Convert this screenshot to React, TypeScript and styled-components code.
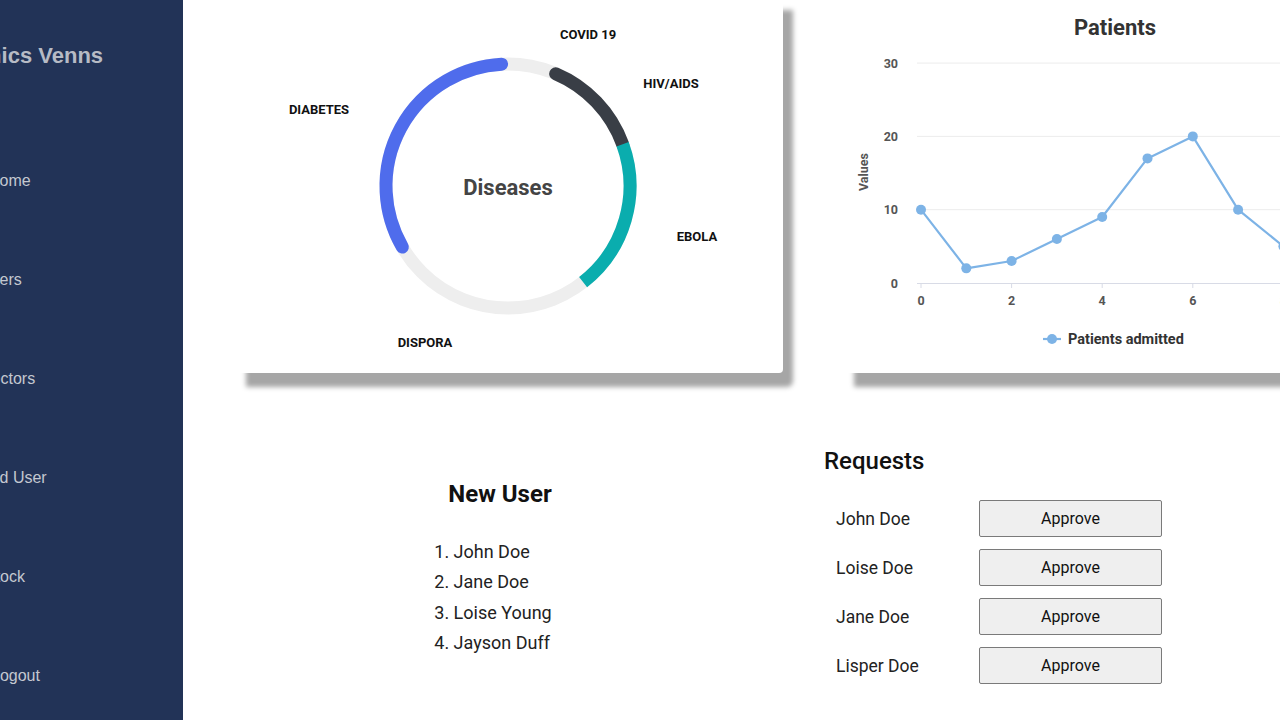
import React from "react";
import styled, { createGlobalStyle } from "styled-components";

// Dashboard: sidebar, two chart cards, new users and requests

const GlobalStyle = createGlobalStyle`
  html, body {
    margin: 0;
    padding: 0;
    overflow: hidden;
    background: #ffffff;
  }
  * {
    box-sizing: border-box;
  }
`;

const navItems = [
  { label: "Home", shift: 12 },
  { label: "Users", shift: 20 },
  { label: "Doctors", shift: 20 },
  { label: "Add User", shift: 20 },
  { label: "Stock", shift: 15 },
  { label: "Logout", shift: 9 },
];

const newUsers = ["John Doe", "Jane Doe", "Loise Young", "Jayson Duff"];
const requests = ["John Doe", "Loise Doe", "Jane Doe", "Lisper Doe"];

const patients = [10, 2, 3, 6, 9, 17, 20, 10, 5];

// donut geometry
const CX = 268;
const CY = 186;
const R = 122;

const point = (deg: number) => {
  const rad = (deg * Math.PI) / 180;
  return `${(CX + R * Math.sin(rad)).toFixed(2)} ${(CY - R * Math.cos(rad)).toFixed(2)}`;
};

const arc = (start: number, end: number) => {
  const large = end - start > 180 ? 1 : 0;
  return `M ${point(start)} A ${R} ${R} 0 ${large} 1 ${point(end)}`;
};

export default function App() {
  const px = (i: number) => 73 + i * 45.3;
  const py = (v: number) => 283 - v * 7.33;
  const linePath = patients
    .map((v, i) => `${i === 0 ? "M" : "L"} ${px(i)} ${py(v)}`)
    .join(" ");

  return (
    <>
      <GlobalStyle />
      <Page>
        <Sidebar>
          <Brand>Clinics Venns</Brand>
          <Nav>
            {navItems.map((item) => (
              <NavItem key={item.label} $shift={item.shift}>
                {item.label}
              </NavItem>
            ))}
          </Nav>
        </Sidebar>

        <Main>
          <CardRow>
            <Card>
              <svg width="543" height="373" viewBox="0 0 543 373">
                <circle cx={CX} cy={CY} r={R} fill="none" stroke="#eeeeee" strokeWidth="13" />
                <path d={arc(240, 357)} fill="none" stroke="#4f6cec" strokeWidth="13" strokeLinecap="round" />
                <path d={arc(23, 70)} fill="none" stroke="#393e46" strokeWidth="13" strokeLinecap="round" />
                <path d={arc(70, 142)} fill="none" stroke="#0aadae" strokeWidth="13" />
                <ChartText x={CX} y={195} textAnchor="middle" fontSize="22" fill="#444">
                  Diseases
                </ChartText>
                <ChartText x={348} y={39} textAnchor="middle" fontSize="13" fill="#111">
                  COVID 19
                </ChartText>
                <ChartText x={431} y={88} textAnchor="middle" fontSize="13" fill="#111">
                  HIV/AIDS
                </ChartText>
                <ChartText x={79} y={114} textAnchor="middle" fontSize="13" fill="#111">
                  DIABETES
                </ChartText>
                <ChartText x={457} y={241} textAnchor="middle" fontSize="13" fill="#111">
                  EBOLA
                </ChartText>
                <ChartText x={185} y={347} textAnchor="middle" fontSize="13" fill="#111">
                  DISPORA
                </ChartText>
              </svg>
            </Card>

            <Card>
              <svg width="543" height="373" viewBox="0 0 543 373">
                <ChartText x={267} y={35} textAnchor="middle" fontSize="22" fill="#333">
                  Patients
                </ChartText>
                {[30, 20, 10].map((v) => (
                  <line key={v} x1="69" x2="543" y1={py(v)} y2={py(v)} stroke="#ececec" strokeWidth="1" />
                ))}
                <line x1="69" x2="543" y1="283.5" y2="283.5" stroke="#d8dbe6" strokeWidth="1.2" />
                {[0, 2, 4, 6, 8].map((v) => (
                  <line key={v} x1={px(v)} x2={px(v)} y1="283" y2="288" stroke="#d8dbe6" strokeWidth="1" />
                ))}
                {[30, 20, 10, 0].map((v) => (
                  <ChartText key={v} x={50} y={py(v) + 4.5} textAnchor="end" fontSize="12.5" fill="#555">
                    {v}
                  </ChartText>
                ))}
                {[0, 2, 4, 6, 8].map((v) => (
                  <ChartText key={v} x={px(v)} y={305} textAnchor="middle" fontSize="12.5" fill="#555">
                    {v}
                  </ChartText>
                ))}
                <ChartText
                  x={0}
                  y={0}
                  textAnchor="middle"
                  fontSize="12.5"
                  fill="#555"
                  transform="translate(20 172) rotate(-90)"
                >
                  Values
                </ChartText>
                <path d={linePath} fill="none" stroke="#7db3e6" strokeWidth="2.2" strokeLinejoin="round" />
                {patients.map((v, i) => (
                  <circle key={i} cx={px(i)} cy={py(v)} r="5" fill="#7db3e6" />
                ))}
                <line x1="195" x2="213" y1="339" y2="339" stroke="#7db3e6" strokeWidth="2.2" />
                <circle cx="204" cy="339" r="5" fill="#7db3e6" />
                <ChartText x={220} y={344} fontSize="14.5" fill="#333">
                  Patients admitted
                </ChartText>
              </svg>
            </Card>
          </CardRow>

          <BottomRow>
            <NewUserColumn>
              <Heading>New User</Heading>
              <UserList>
                {newUsers.map((name) => (
                  <li key={name}>{name}</li>
                ))}
              </UserList>
            </NewUserColumn>

            <RequestsColumn>
              <RequestsHeading>Requests</RequestsHeading>
              <RequestList>
                {requests.map((name) => (
                  <RequestRow key={name}>
                    <RequestName>{name}</RequestName>
                    <ApproveButton>Approve</ApproveButton>
                  </RequestRow>
                ))}
              </RequestList>
            </RequestsColumn>
          </BottomRow>
        </Main>
      </Page>
    </>
  );
}

const Page = styled.div`
  display: flex;
  width: 1420px;
  height: 720px;
  overflow: hidden;
`;

const Sidebar = styled.aside`
  width: 183px;
  flex-shrink: 0;
  height: 720px;
  background-color: #223357;
  overflow: hidden;
  display: flex;
  flex-direction: column;
  font-family: "Liberation Sans", Arial, sans-serif;
`;

const Brand = styled.div`
  margin-top: 42px;
  margin-left: -40px;
  white-space: nowrap;
  font-size: 22px;
  line-height: 28px;
  font-weight: 700;
  color: #b7bbc5;
`;

const Nav = styled.nav`
  margin-top: 101px;
  display: flex;
  flex-direction: column;
  gap: 79px;
`;

const NavItem = styled.div<{ $shift: number }>`
  margin-left: ${(p) => -p.$shift}px;
  white-space: nowrap;
  font-size: 16px;
  line-height: 20px;
  color: #c4c8d0;
`;

const Main = styled.main`
  flex-shrink: 0;
  width: 1237px;
  padding-left: 57px;
  font-family: Roboto, "Liberation Sans", sans-serif;
`;

const CardRow = styled.div`
  display: flex;
  gap: 65px;
`;

const Card = styled.div`
  width: 543px;
  height: 373px;
  flex-shrink: 0;
  background: #ffffff;
  border-radius: 0 0 4px 0;
  box-shadow: 8px 12px 5px 2px #a6a6a6;
`;

const ChartText = styled.text`
  font-family: Roboto, "Liberation Sans", sans-serif;
  font-weight: 700;
`;

const BottomRow = styled.div`
  margin-top: 74px;
  display: flex;
  gap: 64px;
`;

const NewUserColumn = styled.section`
  width: 520px;
  padding-top: 33px;
  display: flex;
  flex-direction: column;
  align-items: center;
`;

const Heading = styled.h2`
  margin: 0;
  font-size: 24px;
  line-height: 28px;
  font-weight: 700;
  color: #111;
`;

const UserList = styled.ol`
  margin: 29px 14px 0 0;
  padding: 0;
  list-style: decimal inside;
  font-size: 18px;
  line-height: 30.3px;
  color: #222;
`;

const RequestsColumn = styled.section`
  display: flex;
  flex-direction: column;
`;

const RequestsHeading = styled.h2`
  margin: 0;
  font-size: 24px;
  line-height: 28px;
  font-weight: 500;
  color: #111;
`;

const RequestList = styled.div`
  margin-top: 25px;
  padding-left: 12px;
  display: flex;
  flex-direction: column;
  gap: 12px;
`;

const RequestRow = styled.div`
  display: flex;
  align-items: center;
`;

const RequestName = styled.span`
  width: 143px;
  font-size: 17.5px;
  color: #222;
`;

const ApproveButton = styled.button`
  width: 183px;
  height: 37px;
  border: 1px solid #7a7a7a;
  border-radius: 2px;
  background: #efefef;
  font-family: Roboto, "Liberation Sans", sans-serif;
  font-size: 16px;
  color: #111;
  cursor: pointer;
`;
